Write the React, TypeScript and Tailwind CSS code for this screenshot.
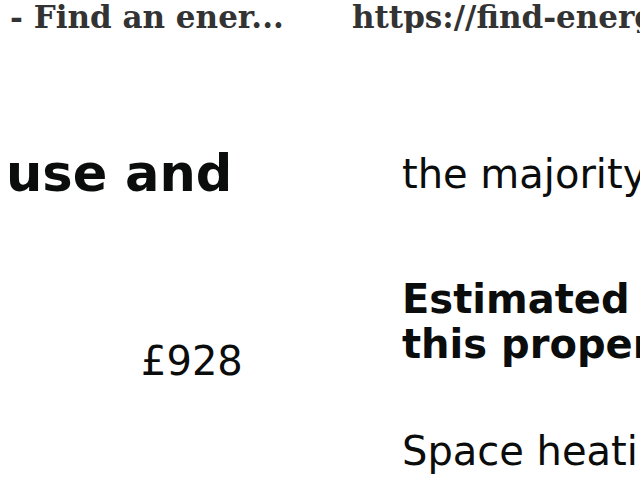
export default function App() {
  return (
    <div className="w-[640px] h-[480px] overflow-hidden bg-white text-[#0b0c0c]">
      <header className="flex whitespace-nowrap pt-[1px] font-['DejaVu_Serif',serif] text-[31px] leading-[32px] font-bold text-[#333333]">
        <span className="w-[352px] shrink-0 pl-[10px]">- Find an ener...</span>
        <span className="min-w-0 overflow-hidden">https://find-energy-certificate.service.gov.uk</span>
      </header>

      <main className="flex font-['DejaVu_Sans',sans-serif]">
        <div className="w-[402px] shrink-0">
          <h2 className="mt-[113px] pl-[6px] text-[51px] leading-[56px] font-bold whitespace-nowrap">use and</h2>
          <p className="mt-[137px] pl-[141px] text-[40px] leading-[45px]">£928</p>
        </div>

        <div className="min-w-0 flex-1 overflow-hidden whitespace-nowrap text-[40px] leading-[45px]">
          <p className="mt-[119px]">the majority of energy in this property</p>
          <p className="mt-[80px] font-bold">
            Estimated energy needed in
            <br />
            this property is
          </p>
          <p className="mt-[62px]">Space heating</p>
        </div>
      </main>
    </div>
  );
}
